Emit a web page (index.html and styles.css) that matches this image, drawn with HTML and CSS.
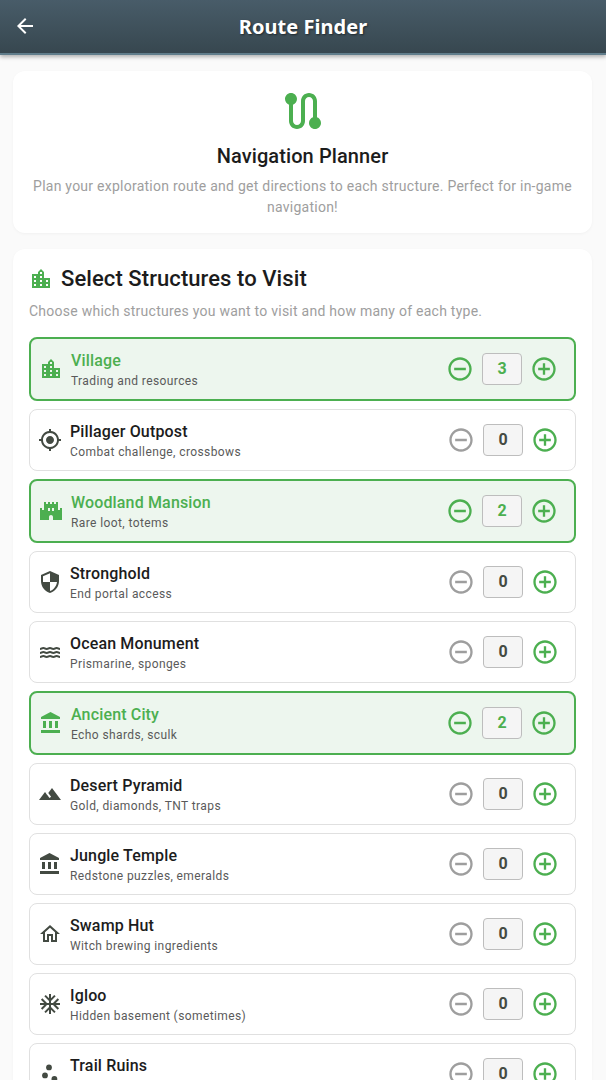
FILE: index.html
```html
<!DOCTYPE html>
<html lang="en">
<head>
  <meta charset="UTF-8">
  <meta name="viewport" content="width=device-width, initial-scale=1.0">
  <title>Route Finder</title>
  <link rel="stylesheet" href="styles.css">
</head>
<body>
  <!-- Shared icons -->
  <svg class="icon-defs" aria-hidden="true">
    <symbol id="i-city" viewBox="0 0 24 24"><path d="M15 11V5l-3-3-3 3v2H3v14h18V11h-6zm-8 8H5v-2h2v2zm0-4H5v-2h2v2zm0-4H5V9h2v2zm6 8h-2v-2h2v2zm0-4h-2v-2h2v2zm0-4h-2V9h2v2zm0-4h-2V5h2v2zm6 12h-2v-2h2v2zm0-4h-2v-2h2v2z"/></symbol>
    <symbol id="i-gps" viewBox="0 0 24 24"><path d="M12 8c-2.21 0-4 1.79-4 4s1.79 4 4 4 4-1.79 4-4-1.79-4-4-4zm8.94 3c-.46-4.17-3.77-7.48-7.94-7.94V1h-2v2.06C6.83 3.52 3.52 6.83 3.06 11H1v2h2.06c.46 4.17 3.77 7.48 7.94 7.94V23h2v-2.06c4.17-.46 7.48-3.77 7.94-7.94H23v-2h-2.06zM12 19c-3.87 0-7-3.13-7-7s3.13-7 7-7 7 3.13 7 7-3.13 7-7 7z"/></symbol>
    <symbol id="i-castle" viewBox="0 0 24 24"><path d="M21 9v2h-2V3h-2v2h-2V3h-2v2h-2V3H9v2H7V3H5v8H3V9H1v12h9v-3c0-1.1.9-2 2-2s2 .9 2 2v3h9V9h-2zm-10 3H9V9h2v3zm4 0h-2V9h2v3z"/></symbol>
    <symbol id="i-shield" viewBox="0 0 24 24"><path d="M12 1L3 5v6c0 5.55 3.84 10.74 9 12 5.16-1.26 9-6.45 9-12V5l-9-4zm0 10.99h7c-.53 4.12-3.28 7.79-7 8.94V12H5V6.3l7-3.11v8.8z"/></symbol>
    <symbol id="i-water" viewBox="0 0 24 24"><path d="M21.98 14H22h-.02zM5.35 13c1.19 0 1.42 1 3.33 1 1.95 0 2.09-1 3.33-1 1.19 0 1.42 1 3.33 1 1.95 0 2.09-1 3.33-1 1.19 0 1.4.98 3.31 1v-2c-1.19 0-1.42-1-3.33-1-1.95 0-2.09 1-3.33 1-1.19 0-1.42-1-3.33-1-1.95 0-2.09 1-3.33 1-1.19 0-1.42-1-3.33-1-1.95 0-2.09 1-3.33 1v2c1.9 0 2.17-1 3.35-1zm13.32 2c-1.95 0-2.09 1-3.33 1-1.19 0-1.42-1-3.33-1-1.95 0-2.1 1-3.34 1-1.24 0-1.38-1-3.33-1-1.95 0-2.1 1-3.34 1v2c1.95 0 2.11-1 3.34-1 1.24 0 1.38 1 3.33 1 1.95 0 2.1-1 3.34-1 1.19 0 1.42 1 3.33 1 1.94 0 2.09-1 3.33-1 1.19 0 1.42 1 3.33 1v-2c-1.24 0-1.38-1-3.33-1zM5.35 9c1.19 0 1.42 1 3.33 1 1.95 0 2.09-1 3.33-1 1.19 0 1.42 1 3.33 1 1.95 0 2.09-1 3.33-1 1.19 0 1.4.98 3.31 1V8c-1.19 0-1.42-1-3.33-1-1.95 0-2.09 1-3.33 1-1.19 0-1.42-1-3.33-1-1.95 0-2.09 1-3.33 1-1.19 0-1.42-1-3.33-1C3.38 7 3.24 8 2 8v2c1.9 0 2.17-1 3.35-1z"/></symbol>
    <symbol id="i-bank" viewBox="0 0 24 24"><path d="M4 10v7h3v-7H4zm6 0v7h3v-7h-3zM2 22h19v-3H2v3zm14-12v7h3v-7h-3zm-4.5-9L2 6v2h19V6l-9.5-5z"/></symbol>
    <symbol id="i-terrain" viewBox="0 0 24 24"><path d="M14 6l-3.75 5 2.85 3.8-1.6 1.2C9.81 13.75 7 10 7 10l-6 8h22L14 6z"/></symbol>
    <symbol id="i-home" viewBox="0 0 24 24"><path d="M12 5.69l5 4.5V18h-2v-6H9v6H7v-7.81l5-4.5M12 3L2 12h3v8h6v-6h2v6h6v-8h3L12 3z"/></symbol>
    <symbol id="i-snow" viewBox="0 0 24 24"><path d="M22 11h-4.17l3.24-3.24-1.41-1.42L15 11h-2V9l4.66-4.66-1.42-1.41L13 6.17V2h-2v4.17L7.76 2.93 6.34 4.34 11 9v2H9L4.34 6.34 2.93 7.76 6.17 11H2v2h4.17l-3.24 3.24 1.41 1.42L9 13h2v2l-4.66 4.66 1.42 1.41L11 17.83V22h2v-4.17l3.24 3.24 1.42-1.41L13 15v-2h2l4.66 4.66 1.41-1.42L17.83 13H22z"/></symbol>
    <symbol id="i-scatter" viewBox="0 0 24 24"><circle cx="7" cy="13.4" r="2.9"/><circle cx="11" cy="5.4" r="2.9"/><circle cx="16.4" cy="17" r="2.9"/></symbol>
    <symbol id="i-minus" viewBox="0 0 24 24"><path d="M7 11v2h10v-2H7zm5-9C6.48 2 2 6.48 2 12s4.48 10 10 10 10-4.48 10-10S17.52 2 12 2zm0 18c-4.41 0-8-3.59-8-8s3.59-8 8-8 8 3.59 8 8-3.59 8-8 8z"/></symbol>
    <symbol id="i-plus" viewBox="0 0 24 24"><path d="M13 7h-2v4H7v2h4v4h2v-4h4v-2h-4V7zm-1-5C6.48 2 2 6.48 2 12s4.48 10 10 10 10-4.48 10-10S17.52 2 12 2zm0 18c-4.41 0-8-3.59-8-8s3.59-8 8-8 8 3.59 8 8-3.59 8-8 8z"/></symbol>
  </svg>

  <header class="app-bar">
    <svg class="back-icon" viewBox="0 0 24 24"><path d="M20 11H7.83l5.59-5.59L12 4l-8 8 8 8 1.41-1.41L7.83 13H20v-2z"/></svg>
    <h1>Route Finder</h1>
  </header>

  <main class="content">
    <section class="card intro">
      <svg class="route-icon" viewBox="0 0 24 24"><path d="M19 15.18V7c0-2.21-1.79-4-4-4s-4 1.79-4 4v10c0 1.1-.9 2-2 2s-2-.9-2-2V8.82C8.16 8.4 9 7.3 9 6c0-1.66-1.34-3-3-3S3 4.34 3 6c0 1.3.84 2.4 2 2.82V17c0 2.21 1.79 4 4 4s4-1.79 4-4V7c0-1.1.9-2 2-2s2 .9 2 2v8.18c-1.16.41-2 1.51-2 2.82 0 1.66 1.34 3 3 3s3-1.34 3-3c0-1.3-.84-2.4-2-2.82z"/></svg>
      <h2>Navigation Planner</h2>
      <p>Plan your exploration route and get directions to each structure. Perfect for in-game navigation!</p>
    </section>

    <section class="card picker">
      <div class="picker-head">
        <svg class="head-icon"><use href="#i-city"/></svg>
        <h3>Select Structures to Visit</h3>
      </div>
      <p class="picker-hint">Choose which structures you want to visit and how many of each type.</p>

      <div class="rows">
        <div class="row selected">
          <svg class="row-icon"><use href="#i-city"/></svg>
          <div class="row-text"><div class="row-name">Village</div><div class="row-sub">Trading and resources</div></div>
          <svg class="step on"><use href="#i-minus"/></svg><div class="count">3</div><svg class="step on"><use href="#i-plus"/></svg>
        </div>
        <div class="row">
          <svg class="row-icon"><use href="#i-gps"/></svg>
          <div class="row-text"><div class="row-name">Pillager Outpost</div><div class="row-sub">Combat challenge, crossbows</div></div>
          <svg class="step"><use href="#i-minus"/></svg><div class="count">0</div><svg class="step on"><use href="#i-plus"/></svg>
        </div>
        <div class="row selected">
          <svg class="row-icon"><use href="#i-castle"/></svg>
          <div class="row-text"><div class="row-name">Woodland Mansion</div><div class="row-sub">Rare loot, totems</div></div>
          <svg class="step on"><use href="#i-minus"/></svg><div class="count">2</div><svg class="step on"><use href="#i-plus"/></svg>
        </div>
        <div class="row">
          <svg class="row-icon"><use href="#i-shield"/></svg>
          <div class="row-text"><div class="row-name">Stronghold</div><div class="row-sub">End portal access</div></div>
          <svg class="step"><use href="#i-minus"/></svg><div class="count">0</div><svg class="step on"><use href="#i-plus"/></svg>
        </div>
        <div class="row">
          <svg class="row-icon"><use href="#i-water"/></svg>
          <div class="row-text"><div class="row-name">Ocean Monument</div><div class="row-sub">Prismarine, sponges</div></div>
          <svg class="step"><use href="#i-minus"/></svg><div class="count">0</div><svg class="step on"><use href="#i-plus"/></svg>
        </div>
        <div class="row selected">
          <svg class="row-icon"><use href="#i-bank"/></svg>
          <div class="row-text"><div class="row-name">Ancient City</div><div class="row-sub">Echo shards, sculk</div></div>
          <svg class="step on"><use href="#i-minus"/></svg><div class="count">2</div><svg class="step on"><use href="#i-plus"/></svg>
        </div>
        <div class="row">
          <svg class="row-icon"><use href="#i-terrain"/></svg>
          <div class="row-text"><div class="row-name">Desert Pyramid</div><div class="row-sub">Gold, diamonds, TNT traps</div></div>
          <svg class="step"><use href="#i-minus"/></svg><div class="count">0</div><svg class="step on"><use href="#i-plus"/></svg>
        </div>
        <div class="row">
          <svg class="row-icon"><use href="#i-bank"/></svg>
          <div class="row-text"><div class="row-name">Jungle Temple</div><div class="row-sub">Redstone puzzles, emeralds</div></div>
          <svg class="step"><use href="#i-minus"/></svg><div class="count">0</div><svg class="step on"><use href="#i-plus"/></svg>
        </div>
        <div class="row">
          <svg class="row-icon"><use href="#i-home"/></svg>
          <div class="row-text"><div class="row-name">Swamp Hut</div><div class="row-sub">Witch brewing ingredients</div></div>
          <svg class="step"><use href="#i-minus"/></svg><div class="count">0</div><svg class="step on"><use href="#i-plus"/></svg>
        </div>
        <div class="row">
          <svg class="row-icon"><use href="#i-snow"/></svg>
          <div class="row-text"><div class="row-name">Igloo</div><div class="row-sub">Hidden basement (sometimes)</div></div>
          <svg class="step"><use href="#i-minus"/></svg><div class="count">0</div><svg class="step on"><use href="#i-plus"/></svg>
        </div>
        <div class="row">
          <svg class="row-icon"><use href="#i-scatter"/></svg>
          <div class="row-text"><div class="row-name">Trail Ruins</div></div>
          <svg class="step"><use href="#i-minus"/></svg><div class="count">0</div><svg class="step on"><use href="#i-plus"/></svg>
        </div>
      </div>
    </section>
  </main>
</body>
</html>
```

FILE: styles.css
```css
html, body {
  height: 100%;
  margin: 0;
  overflow: hidden;
}
body {
  display: flex;
  flex-direction: column;
  font-family: Roboto, "Liberation Sans", sans-serif;
  background-color: #fafafa;
  color: #1c1c1c;
}
h1, h2, h3, p {
  margin: 0;
  font-weight: 500;
}
.icon-defs {
  display: none;
}

/* App bar */
.app-bar {
  flex: none;
  display: flex;
  align-items: center;
  justify-content: center;
  position: relative;
  z-index: 1;
  height: 53px;
  border-bottom: 2px solid #607d8b;
  background: linear-gradient(#485c69, #37474f);
  box-shadow: 0 2px 4px rgba(0, 0, 0, 0.3);
}
.app-bar h1 {
  font-family: "Noto Sans", sans-serif;
  font-size: 20px;
  font-weight: 700;
  letter-spacing: 0.05px;
  color: #fff;
  text-shadow: 1px 1px 2px rgba(0, 0, 0, 0.5);
}
.back-icon {
  position: absolute;
  left: 13px;
  top: 14px;
  width: 24px;
  height: 24px;
  fill: #fff;
}

/* Cards */
.content {
  flex: 1;
  min-height: 0;
  padding: 16px 14px 0 13px;
  overflow: hidden;
}
.card {
  background-color: #fff;
  border-radius: 12px;
  box-shadow: 0 1px 3px rgba(0, 0, 0, 0.04);
  margin-bottom: 16px;
}
.intro {
  height: 162px;
  box-sizing: border-box;
  padding: 16px 16px 0;
  text-align: center;
}
.route-icon {
  display: block;
  width: 48px;
  height: 48px;
  margin: 0 auto 8px;
  fill: #4caf50;
}
.intro h2 {
  font-size: 20px;
  line-height: 26px;
  letter-spacing: 0.1px;
  margin-bottom: 7px;
}
.intro p {
  font-size: 14px;
  font-weight: 400;
  line-height: 21px;
  letter-spacing: 0.25px;
  color: #9e9e9e;
}

.picker {
  padding: 16px;
}
.picker-head {
  display: flex;
  align-items: center;
  gap: 8px;
  height: 28px;
}
.head-icon {
  width: 24px;
  height: 24px;
  fill: #4caf50;
}
.picker-head h3 {
  font-size: 22px;
  line-height: 28px;
  letter-spacing: 0.08px;
}
.picker-hint {
  margin: 8px 0 16px;
  font-size: 14px;
  font-weight: 400;
  line-height: 20px;
  letter-spacing: 0.25px;
  color: #9e9e9e;
}

/* Structure rows */
.rows {
  display: flex;
  flex-direction: column;
  gap: 8px;
}
.row {
  display: flex;
  align-items: center;
  padding: 12px 16px 12px 8px;
  border: 1px solid #e0e0e0;
  border-radius: 8px;
  background-color: #fff;
}
.row.selected {
  border: 2px solid #4caf50;
  background-color: #edf6ee;
}
.row-icon {
  flex: none;
  width: 24px;
  height: 24px;
  margin-right: 8px;
  fill: #434a42;
}
.selected .row-icon {
  fill: #4caf50;
}
.row-text {
  flex: 1;
  min-width: 0;
  height: 36px;
}
.row-name {
  font-size: 16px;
  font-weight: 500;
  line-height: 20px;
  letter-spacing: 0.15px;
}
.selected .row-name {
  color: #4caf50;
}
.row-sub {
  font-size: 12px;
  line-height: 20px;
  letter-spacing: 0.4px;
  color: #5a5a5a;
}

/* Stepper */
.step {
  flex: none;
  width: 28px;
  height: 28px;
  fill: #9e9e9e;
}
.step.on {
  fill: #4caf50;
}
.count {
  flex: none;
  width: 40px;
  height: 32px;
  box-sizing: border-box;
  margin: 0 8px;
  border: 1px solid #bdbdbd;
  border-radius: 4px;
  background-color: #f5f5f5;
  font-size: 16px;
  font-weight: 700;
  line-height: 30px;
  text-align: center;
  color: #434a42;
}
.selected .count {
  color: #4caf50;
}
```
